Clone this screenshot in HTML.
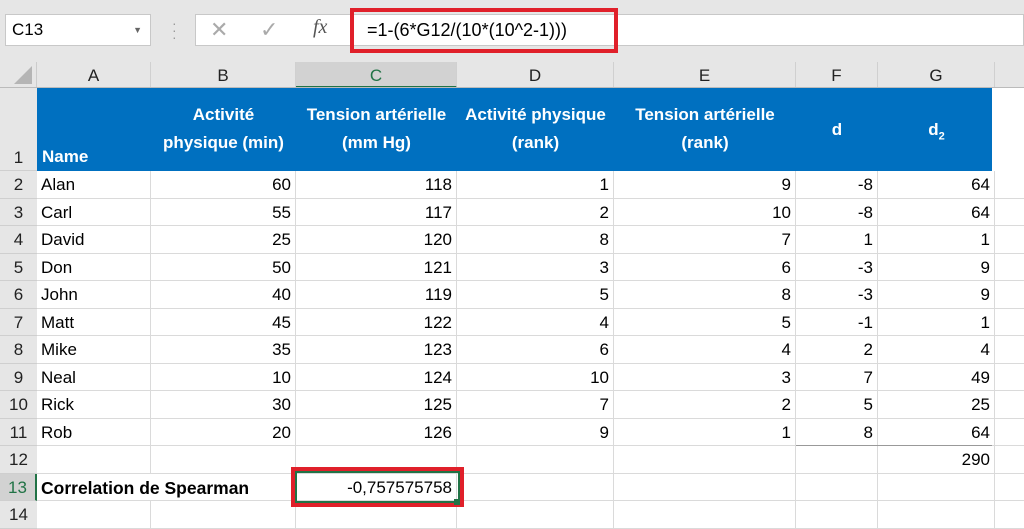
<!DOCTYPE html><html><head><meta charset="utf-8"><style>
body{margin:0;width:1024px;height:529px;overflow:hidden;background:#fff;font-family:"Liberation Sans",sans-serif;position:relative}
.a{position:absolute;box-sizing:border-box}
.c{position:absolute;box-sizing:border-box;font-size:17px;color:#000;padding:0 4px;line-height:28px;white-space:nowrap;overflow:visible}
.r{text-align:right}
.h{position:absolute;font-size:17px;color:#fff;font-weight:bold;text-align:center;line-height:28px;white-space:nowrap}
.ch{position:absolute;top:62px;height:26px;line-height:28px;text-align:center;font-size:17px;color:#222;border-right:1px solid #d0d0d0;background:#e6e6e6;box-sizing:border-box}
.rh{position:absolute;left:0;width:37px;text-align:center;font-size:17px;color:#222;background:#e6e6e6;border-bottom:1px solid #cfcfcf;box-sizing:border-box}
</style></head><body>
<div class="a" style="left:0;top:0;width:1024px;height:62px;background:#e6e6e6"></div>
<div class="a" style="left:5px;top:14px;width:146px;height:32px;background:#fff;border:1px solid #c8c8c8;font-size:17px;line-height:30px;padding-left:6px">C13<span style="position:absolute;right:8px;font-size:9px;color:#666">▼</span></div>
<div class="a" style="left:172px;top:20px;color:#999;font-size:14px;line-height:7px">·<br>·<br>·</div>
<div class="a" style="left:195px;top:14px;width:829px;height:32px;background:#fff;border:1px solid #c8c8c8"></div>
<div class="a" style="left:210px;top:17px;color:#aaa;font-size:22px">✕</div>
<div class="a" style="left:260px;top:17px;color:#aaa;font-size:22px">✓</div>
<div class="a" style="left:313px;top:16px;color:#555;font-size:20px;font-style:italic;font-family:'Liberation Serif',serif">fx</div>
<div class="a" style="left:350px;top:8px;width:268px;height:45px;border:4px solid #e0202a;font-size:18px;line-height:37px;padding-left:13px;white-space:nowrap">=1-(6*G12/(10*(10^2-1)))</div>
<div class="a" style="left:0;top:62px;width:37px;height:26px;background:#e6e6e6;border-right:1px solid #ccc"></div>
<div class="a" style="left:14px;top:66px;width:0;height:0;border-left:18px solid transparent;border-bottom:18px solid #b5b5b5"></div>
<div class="a" style="left:995px;top:62px;width:29px;height:26px;background:#e6e6e6"></div>
<div class="ch" style="left:37px;width:114px">A</div>
<div class="ch" style="left:151px;width:145px">B</div>
<div class="ch" style="left:296px;width:161px;background:#d2d2d2;color:#217346;border-bottom:2px solid #217346">C</div>
<div class="ch" style="left:457px;width:157px">D</div>
<div class="ch" style="left:614px;width:182px">E</div>
<div class="ch" style="left:796px;width:82px">F</div>
<div class="ch" style="left:878px;width:117px">G</div>
<div class="a" style="left:0;top:87px;width:1024px;height:1px;background:#bbb"></div>
<div class="a" style="left:37px;top:88px;width:955px;height:83px;background:#0070c0"></div>
<div class="rh" style="top:88px;height:83px;line-height:140px">1</div>
<div class="h" style="left:42px;top:143px;text-align:left">Name</div>
<div class="h" style="left:151px;width:145px;top:101px">Activité<br>physique (min)</div>
<div class="h" style="left:296px;width:161px;top:101px">Tension artérielle<br>(mm Hg)</div>
<div class="h" style="left:457px;width:157px;top:101px">Activité physique<br>(rank)</div>
<div class="h" style="left:614px;width:182px;top:101px">Tension artérielle<br>(rank)</div>
<div class="h" style="left:796px;width:82px;top:116px">d</div>
<div class="h" style="left:878px;width:117px;top:116px">d<sub style="font-size:11px">2</sub></div>
<div id="g"></div>
<script>
var d=[["Alan",60,118,1,9,-8,64],["Carl",55,117,2,10,-8,64],["David",25,120,8,7,1,1],["Don",50,121,3,6,-3,9],["John",40,119,5,8,-3,9],["Matt",45,122,4,5,-1,1],["Mike",35,123,6,4,2,4],["Neal",10,124,10,3,7,49],["Rick",30,125,7,2,5,25],["Rob",20,126,9,1,8,64]];
var cols=[37,151,296,457,614,796,878,995];var h="";
for(var r=2;r<=14;r++){var t=171+(r-2)*27.5;
h+='<div class="rh" style="top:'+t+'px;height:27.5px;line-height:28px;'+(r==13?'background:#d2d2d2;color:#217346;border-right:2px solid #217346':'')+'">'+r+'</div>';
h+='<div class="a" style="left:37px;top:'+(t+26.5)+'px;width:987px;height:1px;background:#dadada"></div>';
for(var c=1;c<8;c++)h+='<div class="a" style="left:'+(cols[c]-1)+'px;top:'+t+'px;width:1px;height:27.5px;background:#dadada"></div>';
if(r<=11){var v=d[r-2];h+='<div class="c" style="left:37px;top:'+t+'px">'+v[0]+'</div>';
for(var c=1;c<7;c++)h+='<div class="c r" style="left:'+cols[c]+'px;width:'+(cols[c+1]-cols[c]-1)+'px;top:'+t+'px">'+v[c]+'</div>';}}
h+='<div class="c r" style="left:878px;width:116px;top:446px">290</div>';
h+='<div class="a" style="left:796px;top:445px;width:196px;height:1px;background:#999"></div>';
h+='<div class="a" style="left:37px;top:474px;width:254px;height:26px;background:#fff"></div>';
h+='<div class="c" style="left:37px;top:474px;font-weight:bold;font-size:17.5px">Correlation de Spearman</div>';
h+='<div class="a" style="left:291px;top:467px;width:173px;height:40px;border:4px solid #e0202a"></div>';
h+='<div class="a" style="left:295px;top:471px;width:165px;height:32px;border:2px solid #217346"></div>';
h+='<div class="c r" style="left:296px;width:160px;top:474px">-0,757575758</div>';
h+='<div class="a" style="left:454px;top:499px;width:6px;height:6px;background:#217346"></div>';
document.getElementById("g").innerHTML=h;
</script>
</body></html>
